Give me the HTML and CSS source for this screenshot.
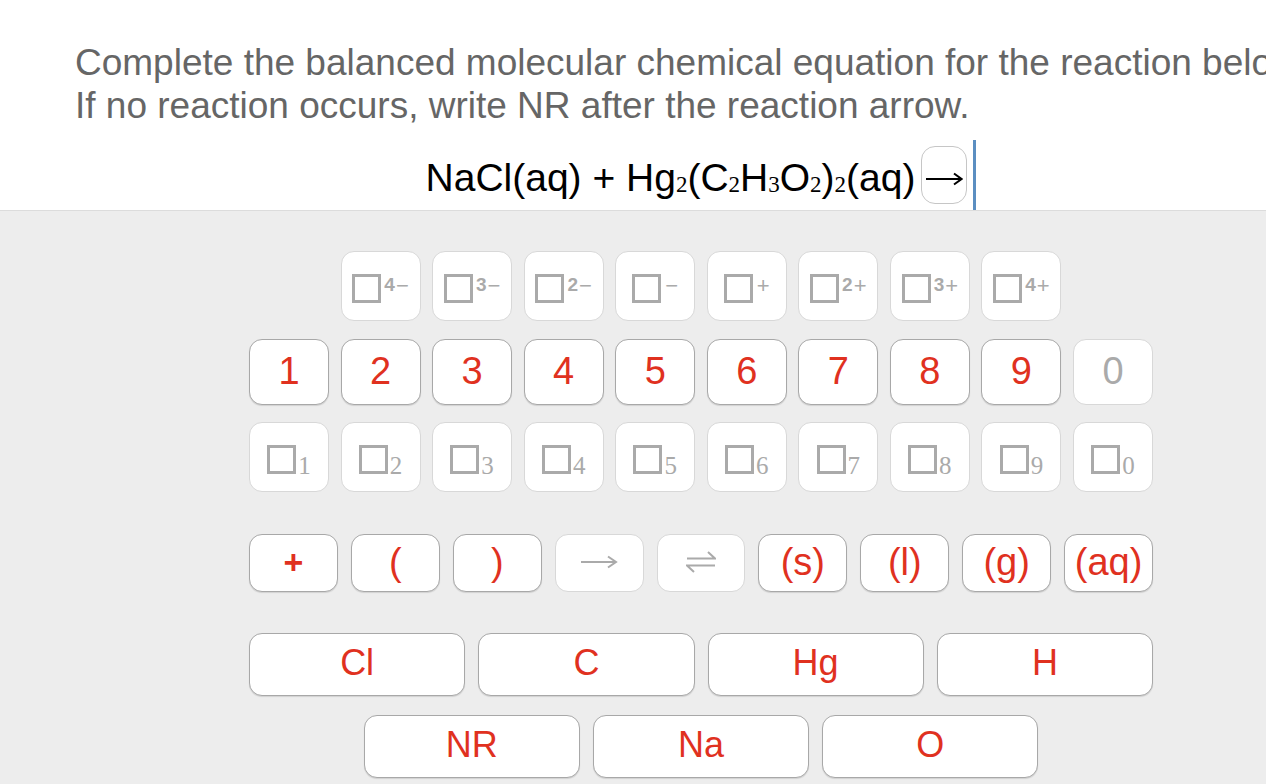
FILE: index.html
```html
<!DOCTYPE html>
<html>
<head>
<meta charset="utf-8">
<link rel="stylesheet" href="styles.css">
</head>
<body>
<div class="top">
  <div class="wrap">
    <p class="question">Complete the balanced molecular chemical equation for the reaction below.<br>If no reaction occurs, write NR after the reaction arrow.</p>
    <div class="equation">
      <span class="eq-text">NaCl(aq) + Hg<sub>2</sub>(C<sub>2</sub>H<sub>3</sub>O<sub>2</sub>)<sub>2</sub>(aq)</span>
      <span class="eq-arrow"><svg width="38" height="14" viewBox="0 0 38 14"><path d="M1 7H36M29 1.5L36.5 7L29 12.5" fill="none" stroke="#000" stroke-width="2"/></svg></span>
      <span class="cursor"></span>
    </div>
  </div>
</div>
<div class="pad">
  <div class="wrap">
    <div class="keypad">
      <div class="row row-charge">
        <div class="key off c2"><span class="box"></span><span class="sup"><b>4</b><i>−</i></span></div>
        <div class="key off"><span class="box"></span><span class="sup"><b>3</b><i>−</i></span></div>
        <div class="key off"><span class="box"></span><span class="sup"><b>2</b><i>−</i></span></div>
        <div class="key off"><span class="box"></span><span class="sup"><i>−</i></span></div>
        <div class="key off"><span class="box"></span><span class="sup"><i>+</i></span></div>
        <div class="key off"><span class="box"></span><span class="sup"><b>2</b><i>+</i></span></div>
        <div class="key off"><span class="box"></span><span class="sup"><b>3</b><i>+</i></span></div>
        <div class="key off"><span class="box"></span><span class="sup"><b>4</b><i>+</i></span></div>
      </div>
      <div class="row row-digits">
        <div class="key on">1</div>
        <div class="key on">2</div>
        <div class="key on">3</div>
        <div class="key on">4</div>
        <div class="key on">5</div>
        <div class="key on">6</div>
        <div class="key on">7</div>
        <div class="key on">8</div>
        <div class="key on">9</div>
        <div class="key off">0</div>
      </div>
      <div class="row row-subs">
        <div class="key off"><span class="box"></span><span class="sub">1</span></div>
        <div class="key off"><span class="box"></span><span class="sub">2</span></div>
        <div class="key off"><span class="box"></span><span class="sub">3</span></div>
        <div class="key off"><span class="box"></span><span class="sub">4</span></div>
        <div class="key off"><span class="box"></span><span class="sub">5</span></div>
        <div class="key off"><span class="box"></span><span class="sub">6</span></div>
        <div class="key off"><span class="box"></span><span class="sub">7</span></div>
        <div class="key off"><span class="box"></span><span class="sub">8</span></div>
        <div class="key off"><span class="box"></span><span class="sub">9</span></div>
        <div class="key off"><span class="box"></span><span class="sub">0</span></div>
      </div>
      <div class="row row-sym">
        <div class="key on plus">+</div>
        <div class="key on">(</div>
        <div class="key on">)</div>
        <div class="key off"><svg width="38" height="16" viewBox="0 0 38 16"><path d="M1 8H36M28 2.5L36 8L28 13.5" fill="none" stroke="#aaa" stroke-width="2"/></svg></div>
        <div class="key off"><svg width="30" height="24" viewBox="0 0 30 24"><path d="M1 8.5H29L22 2M29 15.5H1L8 22" fill="none" stroke="#aaa" stroke-width="2"/></svg></div>
        <div class="key on">(s)</div>
        <div class="key on">(l)</div>
        <div class="key on">(g)</div>
        <div class="key on">(aq)</div>
      </div>
      <div class="row row-el">
        <div class="key on">Cl</div>
        <div class="key on">C</div>
        <div class="key on">Hg</div>
        <div class="key on">H</div>
      </div>
      <div class="row row-el2">
        <div class="key on">NR</div>
        <div class="key on">Na</div>
        <div class="key on">O</div>
      </div>
    </div>
  </div>
</div>
</body>
</html>
```
FILE: styles.css
```css
html, body {
  margin: 0;
  padding: 0;
  overflow: hidden;
  background: #ededed;
}
body {
  width: 1266px;
  height: 784px;
  font-family: "Liberation Sans", Arial, sans-serif;
}
.top {
  background: #fff;
  height: 210px;
}
.wrap {
  margin-left: 75px;
  width: 1252px;
}
.question {
  margin: 0;
  padding-top: 41px;
  font-size: 37px;
  line-height: 43px;
  color: #666;
  white-space: nowrap;
}
.equation {
  display: flex;
  align-items: center;
  justify-content: center;
  height: 70px;
  margin-top: 13px;
}
.eq-text {
  font-size: 39px;
  color: #000;
  margin-top: 6px;
}
.eq-text sub {
  font-family: "Liberation Serif", serif;
  font-size: 23px;
  vertical-align: baseline;
  position: relative;
  top: 1px;
}
.eq-arrow {
  margin-left: 6px;
  border: 1px solid #c6c6c6;
  border-radius: 14px;
  display: flex;
  align-items: center;
  justify-content: center;
  padding-top: 8px;
  box-sizing: border-box;
  height: 58px;
  width: 46px;
}
.cursor {
  width: 3px;
  height: 70px;
  background: #5b8ec1;
  margin-left: 6px;
}
.pad {
  border-top: 1px solid #dcdcdc;
  padding-top: 40px;
}
.keypad {
  width: 904px;
  margin: 0 auto;
}
.row {
  display: grid;
}
.key {
  background: #fff;
  border-radius: 13px;
  box-sizing: border-box;
  display: flex;
  align-items: center;
  justify-content: center;
  color: #e0311f;
  font-size: 38px;
}
.key.on {
  border: 1px solid #a8a8a8;
  box-shadow: 0 1px 1px rgba(0,0,0,0.12);
}
.key.off {
  border: 1px solid #d8d8d8;
  color: #aaa;
}
.row-charge, .row-digits, .row-subs {
  grid-template-columns: repeat(10, 1fr);
  column-gap: 11.5px;
}
.row-charge .c2 {
  grid-column-start: 2;
}
.row-charge .key {
  height: 70px;
}
.row-charge .key, .row-subs .key {
  padding-top: 4px;
}
.row-digits {
  margin-top: 18px;
}
.row-digits .key {
  height: 66px;
  padding-bottom: 2px;
}
.row-subs {
  margin-top: 17px;
}
.row-subs .key {
  height: 70px;
}
.box {
  width: 29px;
  height: 29px;
  border: 3px solid #aaa;
  box-sizing: border-box;
}
.sup {
  align-self: flex-start;
  margin-top: 19px;
  margin-left: 3px;
  display: flex;
  align-items: flex-start;
  height: 20px;
  line-height: 20px;
}
.sup b {
  font-size: 19px;
  font-weight: bold;
  color: #aaa;
}
.sup i {
  font-style: normal;
  font-size: 22px;
  color: #aaa;
  margin-left: 1px;
  position: relative;
  top: 1px;
}
.sub {
  font-family: "Liberation Serif", serif;
  font-size: 25px;
  color: #aaa;
  align-self: flex-end;
  margin-bottom: 13px;
  margin-left: 2px;
  line-height: 25px;
}
.row-sym {
  grid-template-columns: repeat(9, 1fr);
  column-gap: 13px;
  margin-top: 42px;
}
.row-sym .key {
  height: 58px;
  padding-bottom: 2px;
}
.row-sym .plus {
  font-weight: bold;
  font-size: 34px;
}
.row-el {
  grid-template-columns: repeat(4, 1fr);
  column-gap: 13px;
  margin-top: 41px;
}
.row-el .key, .row-el2 .key {
  height: 63px;
  font-size: 36px;
  padding-bottom: 4px;
}
.row-el2 {
  grid-template-columns: repeat(3, 216.25px);
  column-gap: 13px;
  justify-content: center;
  margin-top: 19px;
}
```
